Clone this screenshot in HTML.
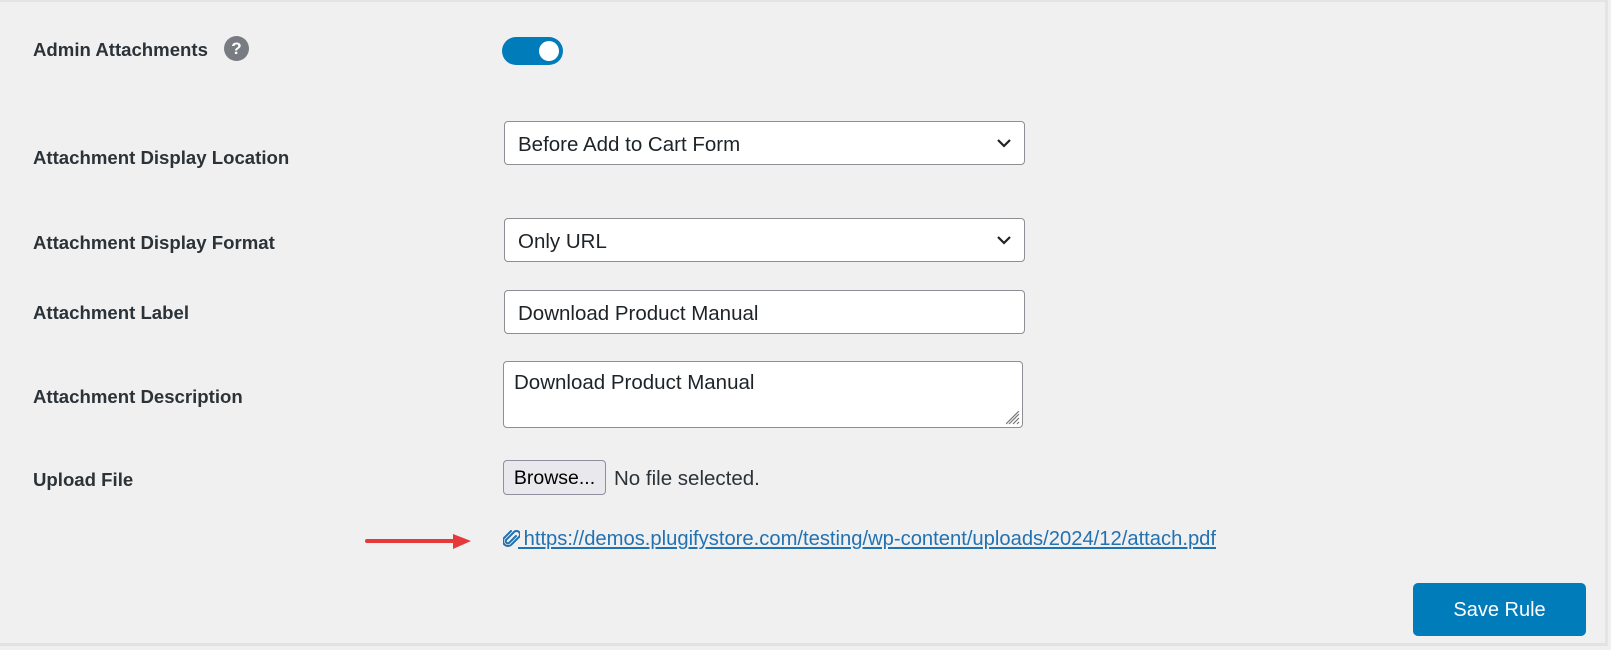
<!DOCTYPE html>
<html><head><style>
body{margin:0;width:1611px;height:650px;background:#f0f0f1;font-family:"Liberation Sans",sans-serif;position:relative;overflow:hidden}
.frame{position:absolute;left:0;top:0;width:1608px;height:646px;border-top:2px solid #e4e4e4;border-right:3px solid #e4e4e4;border-bottom:3px solid #e2e2e2;box-sizing:border-box}
.lbl{position:absolute;left:33px;font-weight:bold;font-size:18.6px;color:#2c3338;transform:translateY(-50%)}
.box{position:absolute;left:504px;width:521px;background:#fff;border:1px solid #8c8f94;border-radius:4px;box-sizing:border-box;font-size:20.5px;color:#1d2327;padding:3px 0 0 13px;display:flex;align-items:center}
.chev{position:absolute;right:12px;top:50%;margin-top:-5px}
</style></head><body>
<div class="frame"></div>
<div class="lbl" style="top:50px">Admin Attachments</div>
<div style="position:absolute;left:224px;top:36px;width:25px;height:25px;border-radius:50%;background:#787c82;color:#fff;font-weight:bold;font-size:17px;text-align:center;line-height:25px">?</div>
<div style="position:absolute;left:502px;top:37px;width:61px;height:28px;border-radius:14px;background:#007cba"><div style="position:absolute;right:4px;top:4px;width:20px;height:20px;border-radius:50%;background:#fff"></div></div>

<div class="lbl" style="top:158px">Attachment Display Location</div>
<div class="box" style="top:121px;height:44px">Before Add to Cart Form<svg class="chev" width="16" height="11" viewBox="0 0 16 11"><path d="M2 2l6 6 6-6" stroke="#1d2327" stroke-width="2.2" fill="none"/></svg></div>

<div class="lbl" style="top:243px">Attachment Display Format</div>
<div class="box" style="top:218px;height:44px">Only URL<svg class="chev" width="16" height="11" viewBox="0 0 16 11"><path d="M2 2l6 6 6-6" stroke="#1d2327" stroke-width="2.2" fill="none"/></svg></div>

<div class="lbl" style="top:313px">Attachment Label</div>
<div class="box" style="top:290px;height:44px">Download Product Manual</div>

<div class="lbl" style="top:397px">Attachment Description</div>
<div class="box" style="top:361px;height:67px;width:520px;left:503px;align-items:flex-start;padding:9px 0 0 10px">Download Product Manual
<svg style="position:absolute;right:2px;bottom:2px" width="14" height="14" viewBox="0 0 14 14"><path d="M13 3L3 13M13 7L7 13M13 11L11 13M13 0L0 13" stroke="#777" stroke-width="1.2"/></svg></div>

<div class="lbl" style="top:480px">Upload File</div>
<div style="position:absolute;left:503px;top:460px;width:103px;height:35px;box-sizing:border-box;border:1px solid #8f8f9d;border-radius:4px;background:#e9e9ed;font-size:19.5px;color:#000;text-align:center;line-height:35px">Browse...</div>
<div style="position:absolute;left:614px;top:467px;font-size:20.5px;color:#2c3338">No file selected.</div>

<svg style="position:absolute;left:365px;top:533px" width="112" height="18" viewBox="0 0 112 18"><path d="M2 8h88" stroke="#e5393a" stroke-width="4" stroke-linecap="round"/><path d="M88 1l18 7-18 8z" fill="#e5393a"/></svg>
<svg style="position:absolute;left:503px;top:530px" width="17" height="19" viewBox="0 0 17 19"><path d="M13 6L6 13a2.2 2.2 0 0 1-3-3l8-8a3.5 3.5 0 0 1 5 5l-8 8a5 5 0 0 1-7-7l7-7" stroke="#2271b1" stroke-width="2" fill="none" stroke-linecap="round"/></svg>
<div style="position:absolute;left:518px;top:528px;font-size:20.2px;color:#2271b1;text-decoration:underline;white-space:nowrap">&nbsp;https://demos.plugifystore.com/testing/wp-content/uploads/2024/12/attach.pdf</div>

<div style="position:absolute;left:1413px;top:583px;width:173px;height:53px;border-radius:5px;background:#007cba;color:#fff;font-size:20px;text-align:center;line-height:55px">Save Rule</div>
</body></html>
